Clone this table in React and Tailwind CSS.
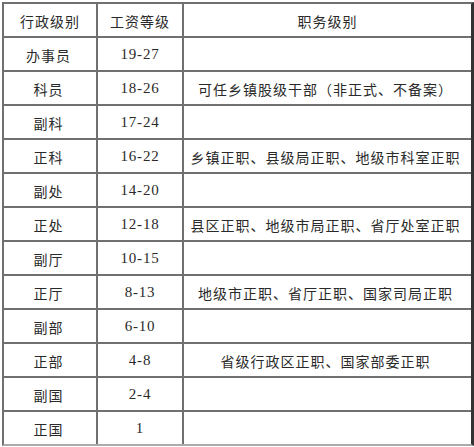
import React from "react";

const rows = [
  ["办事员", "19-27", ""],
  ["科员", "18-26", "可任乡镇股级干部（非正式、不备案）"],
  ["副科", "17-24", ""],
  ["正科", "16-22", "乡镇正职、县级局正职、地级市科室正职"],
  ["副处", "14-20", ""],
  ["正处", "12-18", "县区正职、地级市局正职、省厅处室正职"],
  ["副厅", "10-15", ""],
  ["正厅", "8-13", "地级市正职、省厅正职、国家司局正职"],
  ["副部", "6-10", ""],
  ["正部", "4-8", "省级行政区正职、国家部委正职"],
  ["副国", "2-4", ""],
  ["正国", "1", ""],
];

const cjk = { fontFamily: '"Noto Sans CJK SC", sans-serif' };
const num = { fontFamily: '"Liberation Serif", serif' };

export default function App() {
  return (
    <div className="w-[474px] h-[447px] bg-white pl-[2px] pt-[2px]">
      <div
        className="w-[472px] border-l-2 border-t-2 border-l-[#707070] border-t-[#707070] border-r-[3px] border-r-[#333] border-b-2 border-b-[#ababab] text-[#2a2a2a]"
        style={cjk}
      >
        <div className="flex h-[34px] border-b-2 border-[#707070]">
          <div className="w-[94px] border-r-2 border-[#707070] flex items-center justify-center text-[14px] tracking-[1px] pt-[2px]">
            行政级别
          </div>
          <div className="w-[86px] border-r-2 border-[#707070] flex items-center justify-center text-[14px] tracking-[1px] pt-[2px]">
            工资等级
          </div>
          <div className="flex-1 flex items-center justify-center text-[14px] tracking-[1px] pt-[2px]">
            职务级别
          </div>
        </div>
        {rows.map((r, i) => (
          <div
            key={i}
            className={
              i === rows.length - 1
                ? "flex h-[32px]"
                : "flex h-[34px] border-b-2 border-[#707070]"
            }
          >
            <div className="w-[94px] border-r-2 border-[#707070] flex items-center justify-center text-[14px] tracking-[1px] pt-[2px] pr-[3px]">
              {r[0]}
            </div>
            <div
              className="w-[86px] border-r-2 border-[#707070] flex items-center justify-center text-[15px] tracking-[0.8px] pt-[1px]"
              style={num}
            >
              {r[1]}
            </div>
            <div className="flex-1 flex items-center justify-center text-[14px] tracking-[1px] pt-[2px] pr-[4px]">
              {r[2]}
            </div>
          </div>
        ))}
      </div>
    </div>
  );
}
